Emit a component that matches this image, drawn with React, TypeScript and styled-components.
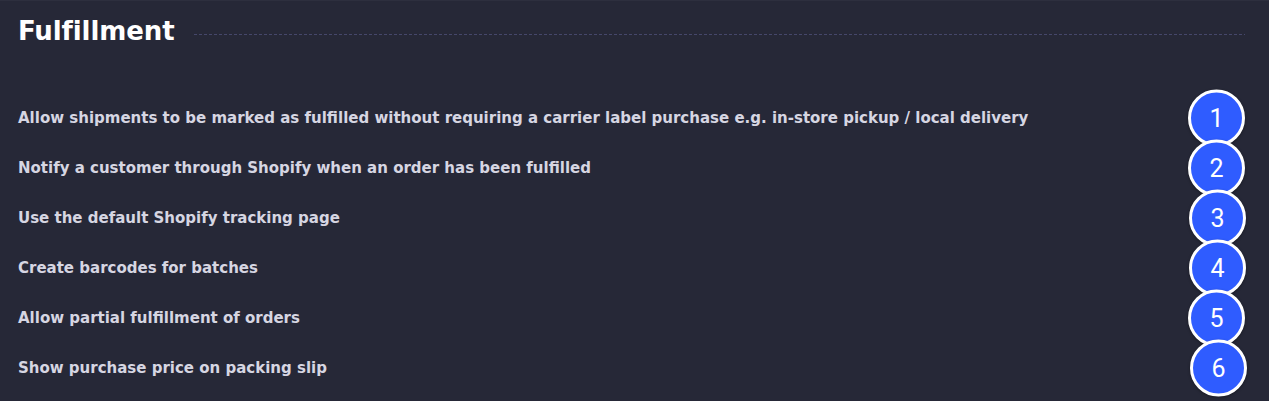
import styled, { createGlobalStyle } from "styled-components";

const Global = createGlobalStyle`
    html, body {
        margin: 0;
        padding: 0;
        background: #262837;
    }
`;

const Panel = styled.section`
    //設定パネル
    box-sizing: border-box;
    width: 1269px;
    height: 401px;
    background: #262837;
    border-top: 1px solid #2d2f3e;
    padding: 14px 24px 0 18px;
    font-family: "DejaVu Sans", "Liberation Sans", sans-serif;
`;

const Header = styled.div`
    display: flex;
    align-items: center;
    gap: 19px;
    height: 32px;
`;

const Title = styled.h2`
    margin: 0;
    font-size: 26px;
    font-weight: bold;
    color: #ffffff;
    letter-spacing: -0.1px;
`;

const Rule = styled.div`
    //点線
    flex: 1;
    height: 1px;
    margin-top: 6px;
    background-image: linear-gradient(to right, #45476a 60%, transparent 60%);
    background-size: 5px 1px;
`;

const List = styled.ul`
    list-style: none;
    margin: 46px 0 0;
    padding: 0;
`;

const Row = styled.li`
    position: relative;
    display: flex;
    align-items: center;
    height: 50px;
`;

const Label = styled.span`
    font-size: 15px;
    font-weight: bold;
    color: #d6d6e2;
`;

const Badge = styled.span<{ $dx: number }>`
    //番号の丸
    position: absolute;
    top: 50%;
    right: ${(p) => -p.$dx}px;
    transform: translateY(-50%);
    box-sizing: border-box;
    width: 57px;
    height: 57px;
    border-radius: 50%;
    border: 3px solid #ffffff;
    background: #2f5cff;
    color: #ffffff;
    display: flex;
    justify-content: center;
    align-items: center;
    font-family: Roboto, "Liberation Sans", sans-serif;
    font-size: 25px;
    box-shadow: 0 1px 3px rgba(0, 0, 0, 0.35);
    z-index: 1;
`;

const items = [
    { text: "Allow shipments to be marked as fulfilled without requiring a carrier label purchase e.g. in-store pickup / local delivery", dx: 0 },
    { text: "Notify a customer through Shopify when an order has been fulfilled", dx: 0 },
    { text: "Use the default Shopify tracking page", dx: 1 },
    { text: "Create barcodes for batches", dx: 1 },
    { text: "Allow partial fulfillment of orders", dx: 0 },
    { text: "Show purchase price on packing slip", dx: 2 },
];

export default function App() {
    return (
        <>
            <Global />
            <Panel>
                <Header>
                    <Title>Fulfillment</Title>
                    <Rule />
                </Header>
                <List>
                    {items.map((item, i) => (
                        <Row key={i}>
                            <Label>{item.text}</Label>
                            <Badge $dx={item.dx}>{i + 1}</Badge>
                        </Row>
                    ))}
                </List>
            </Panel>
        </>
    );
}
